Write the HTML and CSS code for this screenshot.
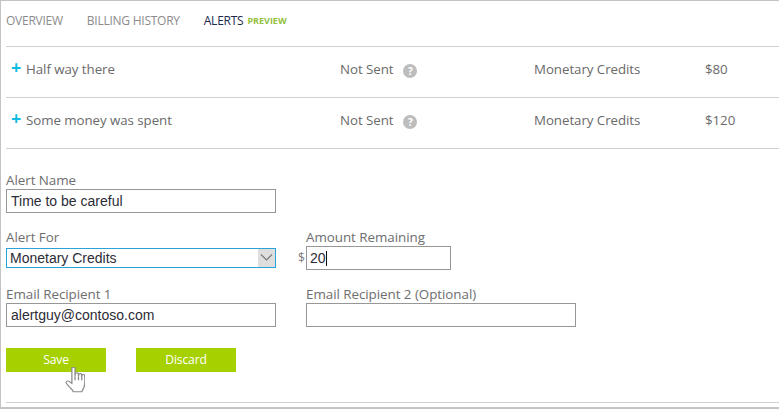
FILE: index.html
```html
<!DOCTYPE html>
<html lang="en">
<head>
<meta charset="utf-8">
<title>Alerts</title>
<link rel="stylesheet" href="styles.css">
</head>
<body>
<div class="frame">
  <nav class="tabs">
    <span class="tab">OVERVIEW</span>
    <span class="tab">BILLING HISTORY</span>
    <span class="tab active">ALERTS</span>
    <span class="preview">PREVIEW</span>
  </nav>
  <div class="row">
    <div class="col-name"><span class="plus">+</span>Half way there</div>
    <div class="col-status">Not Sent<span class="help">?</span></div>
    <div class="col-type">Monetary Credits</div>
    <div class="col-amount">$80</div>
  </div>
  <div class="row">
    <div class="col-name"><span class="plus">+</span>Some money was spent</div>
    <div class="col-status">Not Sent<span class="help">?</span></div>
    <div class="col-type">Monetary Credits</div>
    <div class="col-amount">$120</div>
  </div>
  <form class="form">
    <div class="form-row first">
      <div class="field">
        <div class="label">Alert Name</div>
        <div class="input wide">Time to be careful</div>
      </div>
    </div>
    <div class="form-row second">
      <div class="field">
        <div class="label">Alert For</div>
        <div class="select">
          <span class="select-text">Monetary Credits</span>
          <span class="select-btn">
            <svg width="17" height="18" viewBox="0 0 17 18"><path d="M3 5.5 L8.5 11 L14 5.5" fill="none" stroke="#777" stroke-width="1.1"/></svg>
          </span>
        </div>
      </div>
      <div class="field amount">
        <div class="label">Amount Remaining</div>
        <div class="input-line">
          <span class="dollar">$</span>
          <div class="input short">20<span class="caret"></span></div>
        </div>
      </div>
    </div>
    <div class="form-row third">
      <div class="field">
        <div class="label">Email Recipient 1</div>
        <div class="input wide">alertguy@contoso.com</div>
      </div>
      <div class="field">
        <div class="label">Email Recipient 2 (Optional)</div>
        <div class="input wide"></div>
      </div>
    </div>
    <div class="actions">
      <div class="btn">Save</div>
      <div class="btn">Discard</div>
      <svg class="hand" width="20" height="26" viewBox="0 1 16 25.5" preserveAspectRatio="none">
        <path d="M5.5 2.2 C5.5 0.8 8 0.8 8 2.2 L8 10 L8.3 7.6 C8.5 6.4 10.4 6.4 10.6 7.6 L10.8 10.2 L11 8.2 C11.2 7 13 7 13.2 8.2 L13.4 10.8 L13.6 9.2 C13.9 8 15.6 8.2 15.7 9.4 C16 13 16 17 15.5 19.5 C15 22 14 23.5 13.5 25.2 L6.6 25.2 C6 23.4 4.6 22 3.4 20.4 C2.4 19 1.2 17.6 0.9 16.4 C0.6 15 2.2 14.2 3.2 15 L5.5 17 Z" fill="#fff" stroke="#8a8a8a" stroke-width="1"/>
        <path d="M8 10 V14 M10.8 10.2 V14 M13.4 10.8 V14" stroke="#8a8a8a" stroke-width="1" fill="none"/>
      </svg>
    </div>
  </form>
  <div class="end-line"></div>
</div>
</body>
</html>
```
FILE: styles.css
```css
* { box-sizing: border-box; }
html, body { margin: 0; padding: 0; background: #fff; }
body { width: 779px; height: 409px; overflow: hidden; font-family: "Open Sans", "Noto Sans", sans-serif; color: #6a6a6a; }
.frame { height: 409px; border-top: 1px solid #c4c4c4; border-left: 1px solid #c4c4c4; border-bottom: 2px solid #c4c4c4; padding-left: 5px; }
.tabs { height: 45px; display: flex; align-items: center; font-size: 12px; letter-spacing: -0.25px; padding-bottom: 6px; color: #8b8b8b; }
.tab { margin-right: 24px; }
.tab.active { color: #1d2a4a; margin-right: 4px; }
.preview { color: #93c13e; font-size: 9px; font-weight: 700; letter-spacing: 0; }
.row { height: 51px; border-top: 1px solid #d0d0d0; display: flex; align-items: center; font-size: 13.3px; letter-spacing: -0.05px; padding-bottom: 6px; }
.row + .form { border-top: 1px solid #d0d0d0; }
.col-name { width: 334px; padding-left: 5px; }
.plus { display: inline-block; width: 15px; color: #10bce2; font-weight: 700; font-size: 18px; line-height: 14px; }
.col-status { width: 194px; display: flex; align-items: center; }
.help { width: 14px; height: 14px; border-radius: 50%; background: #bdbdbd; color: #fff; font-size: 10px; font-weight: 700; line-height: 14px; text-align: center; margin-left: 10px; margin-top: 3px; }
.col-type { width: 171px; }
.form { display: block; }
.form-row { display: flex; gap: 30px; align-items: flex-end; }
.first { padding-top: 23px; }
.second { padding-top: 16px; }
.third { padding-top: 16px; }
.field { width: 270px; }
.label { font-size: 13.4px; letter-spacing: -0.05px; line-height: 17px; color: #6e6e6e; }
.input { height: 24px; border: 1px solid #979797; font-family: "Liberation Sans", Arial, sans-serif; font-size: 14px; line-height: 22px; color: #2c2c36; padding-left: 4px; background: #fff; }
.wide { width: 270px; }
.select { width: 270px; height: 20px; margin: 2px 0; border: 1px solid #2aa3d8; display: flex; justify-content: space-between; font-family: "Liberation Sans", Arial, sans-serif; font-size: 14px; line-height: 18px; color: #2c2c36; padding-left: 3px; }
.select-btn { width: 17px; height: 18px; background: #dedede; display: flex; }
.input-line { position: relative; }
.dollar { position: absolute; left: -8px; top: 4px; font-size: 12px; line-height: 16px; color: #7a7a7a; }
.short { width: 145px; padding-left: 3px; }
.caret { display: inline-block; width: 1px; height: 15px; background: #111; vertical-align: -3px; }
.amount { width: 145px; }
.actions { position: relative; display: flex; gap: 30px; padding-top: 21px; }
.btn { width: 100px; height: 24px; background: #a6d000; color: #fff; font-size: 12.2px; line-height: 23px; text-align: center; letter-spacing: -0.2px; }
.hand { position: absolute; left: 59px; top: 40px; }
.end-line { margin-top: 30px; border-top: 1px solid #d0d0d0; }
```
